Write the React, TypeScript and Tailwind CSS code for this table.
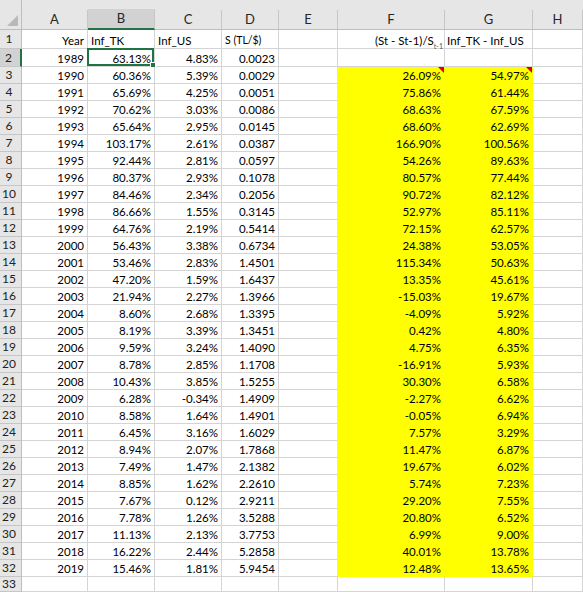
import React from "react";

type Row = [string, string, string, string, string, string];

const data: Row[] = [
  ["1989", "63.13%", "4.83%", "0.0023", "", ""],
  ["1990", "60.36%", "5.39%", "0.0029", "26.09%", "54.97%"],
  ["1991", "65.69%", "4.25%", "0.0051", "75.86%", "61.44%"],
  ["1992", "70.62%", "3.03%", "0.0086", "68.63%", "67.59%"],
  ["1993", "65.64%", "2.95%", "0.0145", "68.60%", "62.69%"],
  ["1994", "103.17%", "2.61%", "0.0387", "166.90%", "100.56%"],
  ["1995", "92.44%", "2.81%", "0.0597", "54.26%", "89.63%"],
  ["1996", "80.37%", "2.93%", "0.1078", "80.57%", "77.44%"],
  ["1997", "84.46%", "2.34%", "0.2056", "90.72%", "82.12%"],
  ["1998", "86.66%", "1.55%", "0.3145", "52.97%", "85.11%"],
  ["1999", "64.76%", "2.19%", "0.5414", "72.15%", "62.57%"],
  ["2000", "56.43%", "3.38%", "0.6734", "24.38%", "53.05%"],
  ["2001", "53.46%", "2.83%", "1.4501", "115.34%", "50.63%"],
  ["2002", "47.20%", "1.59%", "1.6437", "13.35%", "45.61%"],
  ["2003", "21.94%", "2.27%", "1.3966", "-15.03%", "19.67%"],
  ["2004", "8.60%", "2.68%", "1.3395", "-4.09%", "5.92%"],
  ["2005", "8.19%", "3.39%", "1.3451", "0.42%", "4.80%"],
  ["2006", "9.59%", "3.24%", "1.4090", "4.75%", "6.35%"],
  ["2007", "8.78%", "2.85%", "1.1708", "-16.91%", "5.93%"],
  ["2008", "10.43%", "3.85%", "1.5255", "30.30%", "6.58%"],
  ["2009", "6.28%", "-0.34%", "1.4909", "-2.27%", "6.62%"],
  ["2010", "8.58%", "1.64%", "1.4901", "-0.05%", "6.94%"],
  ["2011", "6.45%", "3.16%", "1.6029", "7.57%", "3.29%"],
  ["2012", "8.94%", "2.07%", "1.7868", "11.47%", "6.87%"],
  ["2013", "7.49%", "1.47%", "2.1382", "19.67%", "6.02%"],
  ["2014", "8.85%", "1.62%", "2.2610", "5.74%", "7.23%"],
  ["2015", "7.67%", "0.12%", "2.9211", "29.20%", "7.55%"],
  ["2016", "7.78%", "1.26%", "3.5288", "20.80%", "6.52%"],
  ["2017", "11.13%", "2.13%", "3.7753", "6.99%", "9.00%"],
  ["2018", "16.22%", "2.44%", "5.2858", "40.01%", "13.78%"],
  ["2019", "15.46%", "1.81%", "5.9454", "12.48%", "13.65%"],
];

const cell = "flex items-end pb-[1px] px-[3px] leading-[13px] border-r border-b whitespace-nowrap overflow-visible";
const grid = "border-[#d4d4d4]";
const yellow = "bg-[#ffff00] border-[#ffff00]";

function RowHead({ n, active }: { n: number; active?: boolean }) {
  return (
    <div
      className={
        "flex items-center justify-center pr-[3px] text-[12px] text-[#222] border-b border-[#c6c6c6] " +
        (active ? "bg-[#d2d2d2] border-r-2 border-r-[#217346]" : "bg-[#e6e6e6] border-r border-r-[#bdbdbd]")
      }
    >
      {n}
    </div>
  );
}

function ColHead({ label, active }: { label: string; active?: boolean }) {
  return (
    <div className="flex flex-col bg-[#e6e6e6]">
      <div className="h-[14px]" />
      <div
        className={
          "flex-1 flex items-center justify-center text-[13px] text-[#262626] border-r border-[#c6c6c6] " +
          (active ? "bg-[#d2d2d2] border-b-2 border-b-[#217346]" : "border-b border-b-[#bdbdbd]")
        }
      >
        {label}
      </div>
    </div>
  );
}

function Comment() {
  return (
    <div className="absolute top-0 right-0 w-0 h-0 border-t-[6px] border-t-[#e00000] border-l-[6px] border-l-transparent" />
  );
}

export default function App() {
  return (
    <div
      className="w-[583px] h-[592px] overflow-hidden bg-white text-black text-[11.5px]"
      style={{ fontFamily: "Lato, 'Open Sans', sans-serif" }}
    >
      <div className="grid grid-cols-[22px_66px_67px_67px_57px_59px_107px_88px_1fr] grid-rows-[30px_19px_18px_repeat(30,17px)_15px]">
        {/* Header row */}
        <div className="relative bg-[#e6e6e6] border-r border-b border-[#bdbdbd]">
          <div className="absolute right-[3px] bottom-[3px] w-0 h-0 border-b-[11px] border-b-[#b9b9b9] border-l-[11px] border-l-transparent" />
        </div>
        <ColHead label="A" />
        <ColHead label="B" active />
        <ColHead label="C" />
        <ColHead label="D" />
        <ColHead label="E" />
        <ColHead label="F" />
        <ColHead label="G" />
        <ColHead label="H" />

        {/* Row 1 */}
        <RowHead n={1} />
        <div className={`${cell} ${grid} justify-end`}>Year</div>
        <div className={`${cell} ${grid} justify-start`}>Inf_TK</div>
        <div className={`${cell} ${grid} justify-start`}>Inf_US</div>
        <div className={`${cell} ${grid} justify-start text-[10.5px]`}>S (TL/$)</div>
        <div className={`${cell} ${grid}`} />
        <div className={`${cell} ${grid} justify-end pr-[1px]`}>
          <span>
            (St - St-1)/S<sub className="text-[7px] text-[#555] align-[-2px]">t-1</sub>
          </span>
        </div>
        <div className={`${cell} ${grid} justify-start pl-[2px]`}>Inf_TK - Inf_US</div>
        <div className={`${cell} ${grid}`} />

        {data.map((r, i) => {
          const rowNum = i + 2;
          const isY = rowNum >= 3;
          return (
            <React.Fragment key={rowNum}>
              <RowHead n={rowNum} active={rowNum === 2} />
              <div className={`${cell} ${grid} justify-end`}>{r[0]}</div>
              <div className={`${cell} ${grid} justify-end relative`}>
                {r[1]}
                {rowNum === 2 && (
                  <div className="absolute -left-[1px] -top-[1px] -right-[0px] -bottom-[0px] border-2 border-[#217346] pointer-events-none">
                    <div className="absolute -right-[4px] -bottom-[4px] w-[6px] h-[6px] bg-[#217346] border border-white" />
                  </div>
                )}
              </div>
              <div className={`${cell} ${grid} justify-end`}>{r[2]}</div>
              <div className={`${cell} ${grid} justify-end`}>{r[3]}</div>
              <div className={`${cell} border-b border-b-[#d4d4d4] ${isY ? "border-r-[#ffff00]" : "border-r-[#d4d4d4]"}`} />
              <div className={`${cell} justify-end relative ${isY ? yellow : grid}`}>
                {r[4]}
                {rowNum === 3 && <Comment />}
              </div>
              <div className={`${cell} justify-end relative ${isY ? yellow : grid}`}>
                {r[5]}
                {rowNum === 3 && <Comment />}
              </div>
              <div className={`${cell} ${grid}`} />
            </React.Fragment>
          );
        })}

        {/* Row 33 */}
        <RowHead n={33} />
        <div className={`${cell} ${grid}`} />
        <div className={`${cell} ${grid}`} />
        <div className={`${cell} ${grid}`} />
        <div className={`${cell} ${grid}`} />
        <div className={`${cell} ${grid}`} />
        <div className={`${cell} ${grid}`} />
        <div className={`${cell} ${grid}`} />
        <div className={`${cell} ${grid}`} />
      </div>
    </div>
  );
}
